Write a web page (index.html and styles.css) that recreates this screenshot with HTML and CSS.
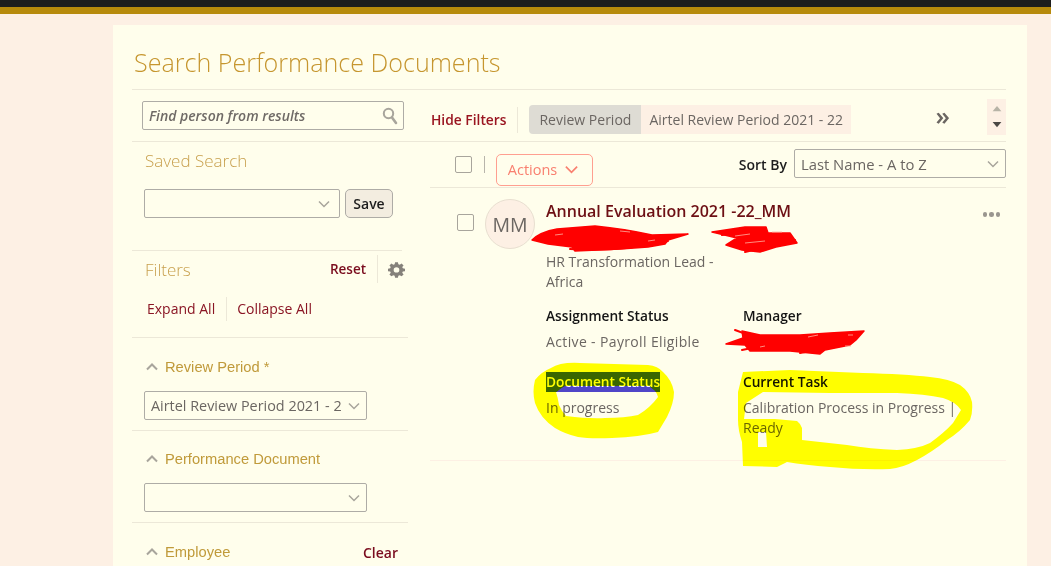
FILE: index.html
```html
<!DOCTYPE html>
<html lang="en">
<head>
<meta charset="utf-8">
<title>Search Performance Documents</title>
<link rel="stylesheet" href="styles.css">
</head>
<body>
<svg class="sprites" width="0" height="0" aria-hidden="true">
  <symbol id="chev" viewBox="0 0 12 8"><path d="M1 1.5 6 6.5 11 1.5" fill="none" stroke="currentColor" stroke-width="1.5"/></symbol>
  <symbol id="chev-up" viewBox="0 0 12 8"><path d="M1 6.5 6 1.5 11 6.5" fill="none" stroke="currentColor" stroke-width="2"/></symbol>
</svg>
<header class="topbar"></header>
<main class="card">
  <h1 class="page-title">Search Performance Documents</h1>

  <div class="topline">
    <div class="search-box">
      <span class="search-text">Find person from results</span>
      <svg class="search-icon" viewBox="0 0 16 18"><circle cx="6.5" cy="6.5" r="4.7" fill="none" stroke="#a8a59c" stroke-width="2"/><path d="M10 10.5 14 16" stroke="#a8a59c" stroke-width="2.6" stroke-linecap="round"/></svg>
    </div>
    <a class="hide-filters">Hide Filters</a>
    <div class="tabs">
      <span class="tab tab-label">Review Period</span>
      <span class="tab tab-value">Airtel Review Period 2021 - 22</span>
    </div>
    <span class="more-tabs">»</span>
    <div class="scroller">
      <svg viewBox="0 0 12 8" class="arrow"><path d="M1 7 6 1 11 7Z" fill="#b7b3a6"/></svg>
      <svg viewBox="0 0 12 8" class="arrow"><path d="M1 1 6 7 11 1Z" fill="#4a4744"/></svg>
    </div>
  </div>

  <div class="columns">
    <aside class="sidebar">
      <section class="saved">
        <h2 class="side-heading">Saved Search</h2>
        <div class="saved-row">
          <div class="select select-saved"><svg class="chev"><use href="#chev"/></svg></div>
          <button class="save-btn">Save</button>
        </div>
      </section>
      <section class="filters">
        <div class="filters-head">
          <h2 class="side-heading">Filters</h2>
          <a class="reset">Reset</a>
          <svg class="gear" viewBox="0 0 24 24"><path fill="#85817b" fill-rule="evenodd" d="M10 1h4l.6 3.2 1.900.8L19.200 3.200l2.800 2.800L20.100 8.600l.8 1.900L24 11v4l-3.100.5-.8 1.900 1.900 2.600-2.800 2.800-2.700-1.800-1.900.8L14 25h-4l-.6-3.200-1.900-.8-2.700 1.800L2 20l1.900-2.600-.8-1.900L0 15v-4l3.100-.5.800-1.900L2 6l2.800-2.800L7.500 5l1.900-.8ZM12 9a4 4 0 1 0 0 8 4 4 0 0 0 0-8Z" transform="scale(1 .92)"/></svg>
        </div>
        <div class="expand-row">
          <a class="expand">Expand All</a>
          <a class="collapse">Collapse All</a>
        </div>
      </section>
      <section class="facet">
        <h3 class="facet-title"><svg class="chev-up"><use href="#chev-up"/></svg>Review Period *</h3>
        <div class="select select-facet"><span class="select-text">Airtel Review Period 2021 - 2</span><svg class="chev"><use href="#chev"/></svg></div>
      </section>
      <section class="facet facet-compact">
        <h3 class="facet-title"><svg class="chev-up"><use href="#chev-up"/></svg>Performance Document</h3>
        <div class="select select-facet"><span class="select-text"></span><svg class="chev"><use href="#chev"/></svg></div>
      </section>
      <section class="facet facet-last">
        <h3 class="facet-title"><svg class="chev-up"><use href="#chev-up"/></svg>Employee<a class="clear">Clear</a></h3>
      </section>
    </aside>

    <section class="results">
      <div class="sort-bar">
        <span class="checkbox"></span>
        <span class="bar-divider"></span>
        <button class="actions">Actions<svg class="actions-chev"><use href="#chev"/></svg></button>
        <span class="sort-label">Sort By</span>
        <div class="select select-sort"><span class="sort-value">Last Name - A to Z</span><svg class="chev"><use href="#chev"/></svg></div>
      </div>
      <article class="result">
        <span class="checkbox checkbox-row"></span>
        <div class="avatar">MM</div>
        <div class="result-body">
          <div class="result-title-row">
            <a class="result-title">Annual Evaluation 2021 -22_MM</a>
            <span class="dots"><i></i><i></i><i></i></span>
          </div>
          <p class="job">HR Transformation Lead - Africa</p>
          <dl class="fields">
            <div class="field"><dt>Assignment Status</dt><dd class="wide">Active - Payroll Eligible</dd></div>
            <div class="field"><dt>Manager</dt><dd>&nbsp;</dd></div>
            <div class="field"><dt><span class="selected">Document Status</span></dt><dd>In progress</dd></div>
            <div class="field"><dt>Current Task</dt><dd>Calibration Process in Progress | Ready</dd></div>
          </dl>
        </div>
      </article>
    </section>
  </div>
</main>

<svg class="marks" viewBox="0 0 1051 566" width="1051" height="566" aria-hidden="true">
  <path class="yellow" fill-rule="evenodd" d="M551 368Q560 362 580 363L648 365Q658 366 663 372Q672 380 674 392Q674 403 667 417L658 432Q640 437 612 438Q590 439 578 437Q565 434 555 428Q540 418 535 403Q532 392 535 380Q541 372 551 368ZM556 392Q558 398 559 405Q562 412 566 416Q590 419 605 418Q625 418 638 415Q650 408 658 397Q656 390 650 386L565 386Q560 388 556 392Z"/>
  <path class="yellow" fill-rule="evenodd" d="M743 372L790 370L863 373Q905 374 930 377Q950 379 960 385Q970 392 972 402Q973 412 970 420Q960 432 947 440Q932 452 917 460Q902 468 890 469Q860 470 830 467Q805 465 787 462L777 467L743 466L742 442Q738 430 738 420L738 392ZM763 392L746 403L744 419L775 419L797 421Q801 424 802 428L802 440L847 445Q870 449 897 450Q918 449 930 443Q945 432 953 423L961 410Q956 402 943 398Q925 394 897 393L830 393ZM758 432L758 447L767 447L766 432Z"/>
  <g class="red">
    <path d="M532 240Q540 232 557 229L595 226Q625 229 652 235L688 234L668 240L665 244L648 247L620 249L575 251L572 247L548 244Z"/>
    <path d="M712 232L745 227L766 227L768 233L790 233L797 243L776 247L760 252L742 250L726 245L737 238Z"/>
    <path d="M726 344L743 338L742 331L760 335L800 335L830 333L864 331L856 340L850 345L825 350L820 354L790 351L750 351L745 345Z"/>
  </g>
  <g class="red-lines">
    <path d="M548 240Q600 222 640 234M570 249Q620 252 668 241M722 235L765 229M745 252L795 240M735 330L770 343M742 350L790 340L858 334M800 353L850 344"/>
  </g>
  <g class="red-gaps">
    <path d="M555 235L563 234M620 231L630 232M648 241L655 240"/>
    <path d="M745 243L765 241M735 236L750 234M772 232L782 232"/>
    <path d="M760 347L765 346M808 337L818 335M848 335L853 335M845 346L851 346"/>
  </g>
</svg>
</body>
</html>
```
FILE: styles.css
```css
* { box-sizing: border-box; }
html, body { height: 100%; }
body {
  margin: 0;
  background: #fdf0e4;
  font-family: "Open Sans", "Noto Sans", sans-serif;
  color: #6b6662;
  overflow: hidden;
  position: relative;
}
a { cursor: pointer; }
.sprites { position: absolute; }

.topbar {
  height: 14px;
  background: #1d1d1d;
  border-bottom: 7px solid #b78a0b;
}

.card {
  margin: 11px 24px 0 113px;
  width: 914px;
  height: 541px;
  overflow: hidden;
  padding: 0 21px 0 19px;
  background: #fffeec;
}

.page-title {
  margin: 0;
  height: 65px;
  padding: 19px 0 0 2px;
  font-size: 25.100px;
  line-height: 36px;
  font-weight: 300;
  color: #c6962f;
  border-bottom: 1px solid #ece8d8;
}

.topline {
  display: flex;
  align-items: center;
  height: 52px;
  border-bottom: 1px solid #ece8d8;
}
.search-box {
  display: flex;
  align-items: center;
  justify-content: space-between;
  margin-left: 10px;
  width: 262px;
  height: 29px;
  flex: none;
  padding: 0 5px 0 6px;
  border: 1px solid #aeaca6;
  border-radius: 2px;
}
.search-text { font-size: 14px; font-style: italic; font-weight: 600; color: #6f6a66; }
.search-icon { width: 16px; height: 18px; }
.hide-filters {
  margin: 9px 0 0 27px;
  padding-right: 11px;
  border-right: 1px solid #ece8d8;
  font-size: 13.800px;
  line-height: 26px;
  font-weight: 600;
  white-space: nowrap;
  color: #9a1520;
}
.tabs { display: flex; margin: 7px 0 0 11px; height: 29px; font-size: 14px; line-height: 29px; white-space: nowrap; }
.tab { padding: 0 8px; color: #6b6662; }
.tab-label { width: 112px; padding-left: 10px; background: #dedcd4; border-radius: 4px 0 0 4px; }
.tab-value { width: 210px; background: #fdf0e4; }
.more-tabs { margin: 0 0 0 84px; width: 53px; font-size: 26px; font-weight: 600; line-height: 29px; color: #6b6662; }
.scroller {
  display: flex;
  flex-direction: column;
  align-items: center;
  gap: 9px;
  justify-content: center;
  margin-top: 2px;
  width: 19px;
  height: 36px;
  background: #fdf0e4;
}
.arrow { width: 12px; height: 7px; display: block; }

.columns { display: flex; }
.sidebar { width: 276px; flex: none; }
.side-heading {
  margin: 0;
  font-size: 17px;
  line-height: 24px;
  font-weight: 300;
  color: #c8a04e;
}
.saved {
  height: 109px;
  margin-right: 6px;
  padding: 7px 0 0 13px;
  border-bottom: 1px solid #ece8d8;
}
.saved-row { display: flex; gap: 5px; margin: 16px 0 0 -1px; }
.select {
  display: flex;
  align-items: center;
  justify-content: flex-end;
  height: 29px;
  border: 1px solid #aeaca6;
  border-radius: 2px;
  color: #a8a59c;
}
.chev { width: 12px; height: 8px; flex: none; }
.select-saved { width: 196px; padding-right: 9px; }
.save-btn {
  width: 48px;
  height: 29px;
  padding: 0;
  background: #f3ede0;
  border: 1px solid #aeaca6;
  border-radius: 5px;
  font: 600 14px "Open Sans", sans-serif;
  color: #1d1d1d;
}
.filters { height: 87px; padding: 7px 0 0 13px; border-bottom: 1px solid #ece8d8; }
.filters-head { display: flex; align-items: center; height: 24px; }
.filters-head .side-heading { flex: 1; }
.reset {
  padding-right: 11px;
  margin-top: -3px;
  margin-right: 10px;
  border-right: 1px solid #ece8d8;
  font-size: 13.500px;
  line-height: 28px;
  font-weight: 600;
  color: #7a0c1e;
}
.gear { width: 17px; height: 18px; margin-right: 3px; }
.expand-row { display: flex; margin: 15px 0 0 2px; font-size: 14px; line-height: 24px; color: #8a1524; }
.expand { padding-right: 11px; border-right: 1px solid #ece8d8; }
.collapse { padding-left: 10px; }

.facet { height: 93px; padding: 17px 0 0 12px; border-bottom: 1px solid #ece8d8; }
.facet > .facet-title { margin-bottom: 12px; }
.facet-compact { height: 92px; padding-top: 16px; }
.facet-last { height: 43px; border-bottom: 0; }
.facet-title {
  display: flex;
  align-items: center;
  margin: 0;
  height: 24px;
  font: 400 14.700px "Liberation Sans", Arial, sans-serif;
  color: #c09a3a;
}
.chev-up { width: 12px; height: 8px; margin: 0 7px 0 2px; color: #a8a59c; }
.select-facet { width: 223px; justify-content: space-between; padding: 0 6px; }
.select-text { font-size: 14.400px; font-weight: 500; color: #6b6662; white-space: nowrap; }
.clear {
  margin-left: auto;
  margin-right: 10px;
  font: 600 14px "Open Sans", sans-serif;
  color: #7a0c1e;
}

.results { width: 576px; margin-left: 22px; flex: none; }
.sort-bar {
  position: relative;
  display: flex;
  align-items: center;
  height: 46px;
  padding-left: 25px;
  border-bottom: 1px solid #ece8d8;
}
.checkbox {
  display: block;
  width: 17px;
  height: 17px;
  flex: none;
  background: #fffeec;
  border: 1px solid #a8a59c;
  border-radius: 2px;
}
.bar-divider { width: 1px; height: 17px; margin: 0 11px 0 12px; background: #b8b5ab; }
.actions {
  display: flex;
  align-items: center;
  justify-content: center;
  gap: 7px;
  width: 97px;
  height: 32px;
  margin-top: 10px;
  padding: 0 2px 0 0;
  background: transparent;
  border: 1px solid #ff9f90;
  border-radius: 5px;
  font: 400 14.500px "Open Sans", sans-serif;
  color: #f98070;
}
.actions-chev { width: 15px; height: 9px; color: #f98070; }
.sort-label { margin: 0 7px 0 auto; font-size: 14px; font-weight: 600; color: #1d1d1d; }
.select-sort { width: 212px; justify-content: space-between; padding: 0 6px; margin-top: -2px; color: #a8a59c; }
.sort-value { font-size: 14.800px; color: #6b6662; }

.result { display: flex; height: 273px; border-bottom: 1px solid #fdf0e4; }
.checkbox-row { margin: 26px 11px 0 27px; }
.avatar {
  display: flex;
  align-items: center;
  justify-content: center;
  width: 50px;
  height: 50px;
  flex: none;
  margin-top: 11px;
  background: #fdf0e4;
  border: 1px solid #e8dfd0;
  border-radius: 50%;
  font-size: 19.500px;
  color: #6b6662;
}
.result-body { flex: 1; padding-left: 11px; }
.result-title-row { display: flex; justify-content: space-between; height: 24px; margin-top: 11px; }
.result-title { font-size: 16px; line-height: 24px; font-weight: 600; color: #6d0f14; }
.dots { display: flex; gap: 2px; margin: 13px 6px 0 0; }
.dots i { width: 4.500px; height: 4.500px; border-radius: 50%; background: #9a968f; }
.job { width: 180px; margin: 29px 0 0; font-size: 14px; line-height: 20px; }
.fields {
  display: grid;
  grid-template-columns: 197px 1fr;
  grid-auto-rows: 66px;
  margin: 14px 0 0;
}
.field { width: 215px; }
.field dt { font-size: 13.700px; line-height: 20px; font-weight: 600; color: #141414; }
.field dd { margin: 6px 0 0; font-size: 14px; line-height: 20px; color: #6b6662; }
.field .wide { letter-spacing: .36px; }
.selected {
  position: relative;
  z-index: 0;
  display: inline-block;
  background: #3a6600;
  color: #fff;
}
.selected::before {
  content: "";
  position: absolute;
  inset: 0;
  z-index: -1;
  background: #5045c8;
  clip-path: polygon(9% 100%, 16% 70%, 90% 70%, 97% 100%);
}

.marks { position: absolute; left: 0; top: 0; pointer-events: none; }
.yellow { fill: #ffff00; mix-blend-mode: multiply; }
.red path { fill: #ff0000; stroke: #ff0000; stroke-width: 1.500; stroke-linejoin: round; }
.red-lines path { fill: none; stroke: #ff0000; stroke-width: 2; stroke-linecap: round; }
.red-gaps path { fill: none; stroke: #ffb0a0; stroke-width: .8; }
```
